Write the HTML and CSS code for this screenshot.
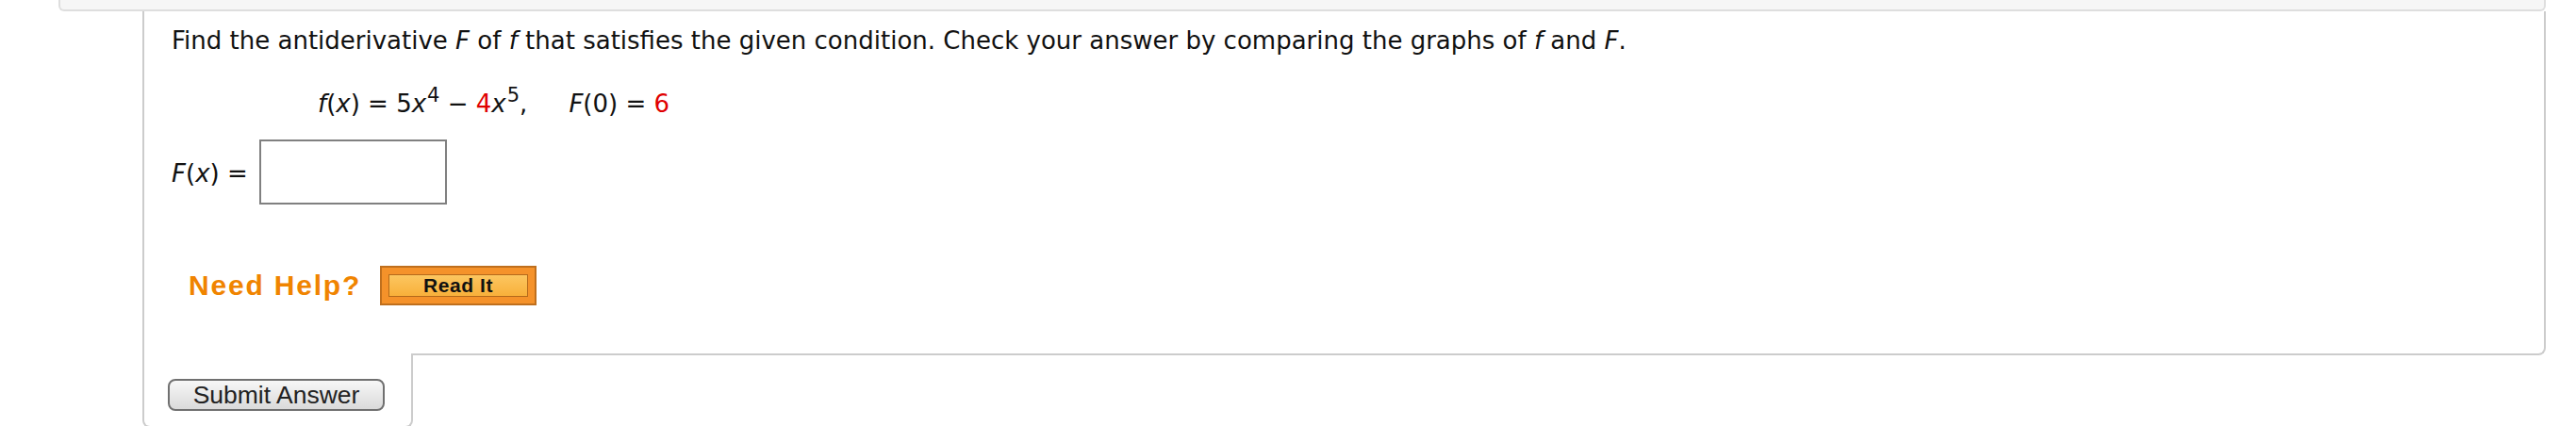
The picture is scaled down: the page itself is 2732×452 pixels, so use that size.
FILE: index.html
```html
<!DOCTYPE html>
<html lang="en">
<head>
  <meta charset="UTF-8">
  <meta name="viewport" content="width=device-width, initial-scale=1.0">
  <link rel="stylesheet" href="styles.css">
  <title>Antiderivative Question</title>
</head>
<body>
  <div class="prev-question"></div>

  <div class="question">
    <div class="question-body">
      <p class="prompt">Find the antiderivative <i>F</i> of <i>f</i> that satisfies the given condition. Check your answer by comparing the graphs of <i>f</i> and <i>F</i>.</p>
      <p class="formula"><i>f</i>(<i>x</i>) = 5<i>x</i><sup>4</sup> &minus; <span class="red">4</span><i>x</i><sup>5</sup>,<span class="gap"></span><i>F</i>(0) = <span class="red">6</span></p>

      <div class="answer-row">
        <span class="answer-label"><i>F</i>(<i>x</i>) =</span>
        <input class="answer-box" type="text">
      </div>

      <div class="help-row">
        <span class="need-help">Need Help?</span>
        <button class="read-it"><span>Read It</span></button>
      </div>
    </div>

    <div class="submit-tab">
      <button class="submit-button">Submit Answer</button>
    </div>
  </div>
</body>
</html>
```

FILE: styles.css
```css
  body {
    margin: 0;
    background-color: #fff;
    font-family: "DejaVu Sans", Verdana, sans-serif;
    color: #111;
  }

  .prev-question {
    margin-left: 62px;
    width: 2638px;
    height: 12px;
    box-sizing: border-box;
    background-color: #f6f6f6;
    border: 2px solid #dedede;
    border-top: none;
    border-radius: 0 0 6px 6px;
  }

  .question {
    margin-left: 151px;
    width: 2549px;
  }

  .question-body {
    box-sizing: border-box;
    height: 365px;
    padding: 15px 29px 0;
    border: 2px solid #ccc;
    border-top: none;
    border-bottom-right-radius: 8px;
  }

  .prompt {
    margin: 0;
    font-size: 26px;
    line-height: 32px;
  }

  .formula {
    margin: 35px 0 0 155px;
    font-size: 26px;
    line-height: 32px;
  }

  .formula sup {
    font-size: 21px;
    line-height: 0;
    vertical-align: 11px;
    margin-left: 1px;
  }

  .red {
    color: #e00000;
  }

  .gap {
    display: inline-block;
    width: 44px;
  }

  .answer-row {
    display: flex;
    align-items: flex-start;
    gap: 12px;
    margin-top: 22px;
  }

  .answer-label {
    margin-top: 20px;
    font-size: 26px;
    line-height: 32px;
  }

  .answer-box {
    width: 199px;
    height: 69px;
    box-sizing: border-box;
    margin: 0;
    border: 2px solid #808080;
    background: #fff;
  }

  .help-row {
    display: flex;
    align-items: center;
    margin: 65px 0 0 18px;
  }

  .need-help {
    font-family: "Liberation Sans", Arial, sans-serif;
    font-weight: bold;
    font-size: 30px;
    letter-spacing: 1.8px;
    color: #f08400;
  }

  .read-it {
    width: 166px;
    height: 42px;
    box-sizing: border-box;
    margin: 0 0 0 20px;
    padding: 7px;
    border: 2px solid #bf6f1d;
    background-color: #f5922a;
    cursor: pointer;
  }

  .read-it span {
    display: block;
    height: 100%;
    box-sizing: border-box;
    border: 1px solid #b56a1b;
    background: linear-gradient(#fcc660, #f8b03a);
    font-family: "Liberation Sans", Arial, sans-serif;
    font-weight: bold;
    font-size: 21px;
    letter-spacing: 0.6px;
    line-height: 22px;
    color: #111;
  }

  .submit-tab {
    box-sizing: border-box;
    width: 287px;
    height: 79px;
    margin-top: -2px;
    padding: 27px 0 0 25px;
    background-color: #fff;
    border: 2px solid #ccc;
    border-top: none;
    border-radius: 0 0 8px 8px;
  }

  .submit-button {
    width: 230px;
    height: 34px;
    box-sizing: border-box;
    padding: 0;
    border: 2px solid #707070;
    border-radius: 8px;
    background: linear-gradient(#f7f7f7, #dadada);
    font-family: "Liberation Sans", Arial, sans-serif;
    font-size: 26.5px;
    color: #222;
    cursor: pointer;
  }
```
